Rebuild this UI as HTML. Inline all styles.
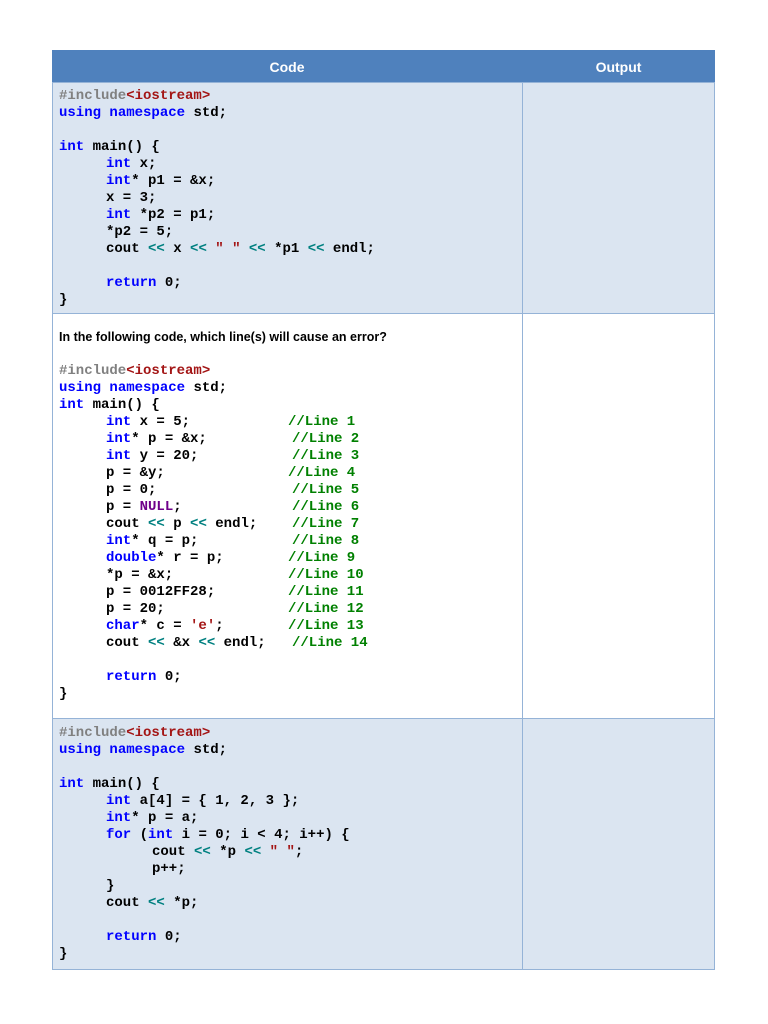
<!DOCTYPE html>
<html><head><style>
body{margin:0;width:768px;height:1024px;background:#fff;position:relative;overflow:hidden}
.c{position:absolute;box-sizing:border-box}
.hd{background:#4f81bd;color:#fff;font:bold 14px "Liberation Sans",sans-serif;text-align:center;line-height:32px}
pre{margin:0;position:absolute;left:59px;font:bold 14px/17px "Liberation Mono",monospace;color:#000}
.k{color:#0000ff}.g{color:#808080}.r{color:#a31515}.t{color:#008080}.p{color:#6f008a}.m{color:#008000;position:absolute}
.i{display:inline-block;width:47px}.ii{display:inline-block;width:93px}
.q{position:absolute;left:59px;top:330px;font:bold 12.5px "Liberation Sans",sans-serif}
</style></head><body>
<div class="c hd" style="left:52px;top:50px;width:470px;height:32px;border:1px solid #4f81bd">Code</div>
<div class="c hd" style="left:522px;top:50px;width:193px;height:32px;border:1px solid #4f81bd">Output</div>
<div class="c" style="left:52px;top:82px;width:471px;height:232px;background:#dbe5f1;border:1px solid #95b3d7"></div>
<div class="c" style="left:522px;top:82px;width:193px;height:232px;background:#dbe5f1;border:1px solid #95b3d7"></div>
<div class="c" style="left:52px;top:313px;width:471px;height:406px;background:#fff;border:1px solid #95b3d7"></div>
<div class="c" style="left:522px;top:313px;width:193px;height:406px;background:#fff;border:1px solid #95b3d7"></div>
<div class="c" style="left:52px;top:718px;width:471px;height:252px;background:#dbe5f1;border:1px solid #95b3d7"></div>
<div class="c" style="left:522px;top:718px;width:193px;height:252px;background:#dbe5f1;border:1px solid #95b3d7"></div>

<pre style="top:88px"><span class="g">#include</span><span class="r">&lt;iostream&gt;</span>
<span class="k">using</span> <span class="k">namespace</span> std;

<span class="k">int</span> main() {
<span class="i"></span><span class="k">int</span> x;
<span class="i"></span><span class="k">int</span>* p1 = &amp;x;
<span class="i"></span>x = 3;
<span class="i"></span><span class="k">int</span> *p2 = p1;
<span class="i"></span>*p2 = 5;
<span class="i"></span>cout <span class="t">&lt;&lt;</span> x <span class="t">&lt;&lt;</span> <span class="r">" "</span> <span class="t">&lt;&lt;</span> *p1 <span class="t">&lt;&lt;</span> endl;

<span class="i"></span><span class="k">return</span> 0;
}</pre>

<div class="q">In the following code, which line(s) will cause an error?</div>

<pre style="top:363px"><span class="g">#include</span><span class="r">&lt;iostream&gt;</span>
<span class="k">using</span> <span class="k">namespace</span> std;
<span class="k">int</span> main() {
<span class="i"></span><span class="k">int</span> x = 5;<span class="m" style="left:229px">//Line 1</span>
<span class="i"></span><span class="k">int</span>* p = &amp;x;<span class="m" style="left:233px">//Line 2</span>
<span class="i"></span><span class="k">int</span> y = 20;<span class="m" style="left:233px">//Line 3</span>
<span class="i"></span>p = &amp;y;<span class="m" style="left:229px">//Line 4</span>
<span class="i"></span>p = 0;<span class="m" style="left:233px">//Line 5</span>
<span class="i"></span>p = <span class="p">NULL</span>;<span class="m" style="left:233px">//Line 6</span>
<span class="i"></span>cout <span class="t">&lt;&lt;</span> p <span class="t">&lt;&lt;</span> endl;<span class="m" style="left:233px">//Line 7</span>
<span class="i"></span><span class="k">int</span>* q = p;<span class="m" style="left:233px">//Line 8</span>
<span class="i"></span><span class="k">double</span>* r = p;<span class="m" style="left:229px">//Line 9</span>
<span class="i"></span>*p = &amp;x;<span class="m" style="left:229px">//Line 10</span>
<span class="i"></span>p = 0012FF28;<span class="m" style="left:229px">//Line 11</span>
<span class="i"></span>p = 20;<span class="m" style="left:229px">//Line 12</span>
<span class="i"></span><span class="k">char</span>* c = <span class="r">'e'</span>;<span class="m" style="left:229px">//Line 13</span>
<span class="i"></span>cout <span class="t">&lt;&lt;</span> &amp;x <span class="t">&lt;&lt;</span> endl;<span class="m" style="left:233px">//Line 14</span>

<span class="i"></span><span class="k">return</span> 0;
}</pre>

<pre style="top:725px"><span class="g">#include</span><span class="r">&lt;iostream&gt;</span>
<span class="k">using</span> <span class="k">namespace</span> std;

<span class="k">int</span> main() {
<span class="i"></span><span class="k">int</span> a[4] = { 1, 2, 3 };
<span class="i"></span><span class="k">int</span>* p = a;
<span class="i"></span><span class="k">for</span> (<span class="k">int</span> i = 0; i &lt; 4; i++) {
<span class="ii"></span>cout <span class="t">&lt;&lt;</span> *p <span class="t">&lt;&lt;</span> <span class="r">" "</span>;
<span class="ii"></span>p++;
<span class="i"></span>}
<span class="i"></span>cout <span class="t">&lt;&lt;</span> *p;

<span class="i"></span><span class="k">return</span> 0;
}</pre>
</body></html>
